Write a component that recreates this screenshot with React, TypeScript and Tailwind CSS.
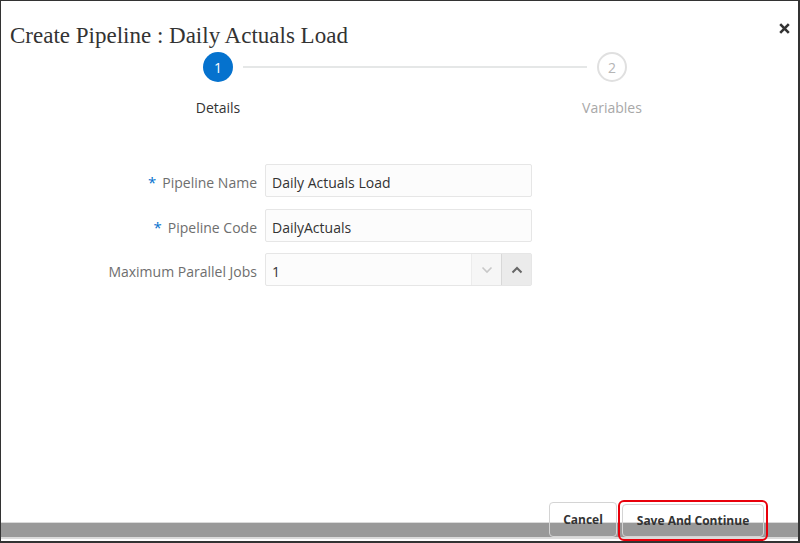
import React from "react";

const sans = "font-['Open_Sans','Liberation_Sans',sans-serif]";

function Field({ label, required, value }: { label: string; required?: boolean; value: string }) {
  return (
    <>
      <div className="flex h-[33px] items-center justify-end pt-[4px] text-[14px] text-[#6e6e6e]">
        {required && <span className="mr-[6px] align-[4px] text-[15px] leading-none text-[#0572ce]">*</span>}
        <span>{label}</span>
      </div>
      <div className="flex h-[33px] items-center rounded-[2px] border border-[#e6e6e6] bg-[#fcfcfc] px-[6px] pt-[4px] text-[14px] text-[#333]">
        {value}
      </div>
    </>
  );
}

export default function App() {
  return (
    <div
      className={`flex h-[543px] w-[800px] flex-col border-t border-l border-r-2 border-b-2 border-[#333] bg-white ${sans}`}
    >
      {/* header */}
      <div className="flex items-start justify-between pl-[9px] pr-[8px] pt-[21px]">
        <h1 className="h-[28px] font-['Liberation_Serif','DejaVu_Serif',serif] text-[23px] leading-[28px] text-[#333]">
          Create Pipeline : Daily Actuals Load
        </h1>
        <svg width="11" height="11" viewBox="0 0 11 11" className="mt-[1px]">
          <path d="M1.2 1.2 L9.8 9.8 M9.8 1.2 L1.2 9.8" stroke="#333" strokeWidth="2.6" strokeLinecap="butt" />
        </svg>
      </div>

      {/* stepper */}
      <div className="ml-[177px] mt-[2px] grid w-[474px] grid-cols-[80px_1fr_80px]">
        <div className="flex justify-center">
          <div className="flex h-[30px] w-[30px] items-center justify-center rounded-full bg-[#0572ce] text-[14px] text-white">
            1
          </div>
        </div>
        <div className="mx-[-15px] flex items-center">
          <div className="h-[2px] w-full bg-[#e5e7e7]" />
        </div>
        <div className="flex justify-center">
          <div className="flex h-[30px] w-[30px] items-center justify-center rounded-full border-2 border-[#e0e0e0] text-[14px] text-[#b5b5b5]">
            2
          </div>
        </div>
        <div className="mt-[16px] text-center text-[14px] leading-[20px] text-[#333]">Details</div>
        <div />
        <div className="mt-[16px] text-center text-[14px] leading-[20px] text-[#a8a8a8]">Variables</div>
      </div>

      {/* form */}
      <div className="mt-[46px] grid grid-cols-[256px_267px] gap-x-[8px] gap-y-[11.5px]">
        <Field label="Pipeline Name" required value="Daily Actuals Load" />
        <Field label="Pipeline Code" required value="DailyActuals" />
        <div className="flex h-[33px] items-center justify-end pt-[4px] text-[14px] text-[#6e6e6e]">Maximum Parallel Jobs</div>
        <div className="flex h-[33px] rounded-[2px] border border-[#e6e6e6] bg-[#fcfcfc] text-[14px] text-[#333]">
          <div className="flex flex-1 items-center px-[6px] pt-[4px]">1</div>
          <div className="flex w-[30px] items-center justify-center border-l border-[#ececec] bg-[#f6f6f6]">
            <svg width="12" height="8" viewBox="0 0 12 8">
              <path d="M1.5 1.5 L6 6 L10.5 1.5" fill="none" stroke="#c8c8c8" strokeWidth="1.6" />
            </svg>
          </div>
          <div className="flex w-[30px] items-center justify-center border-l border-[#d8d8d8] bg-[#ebebeb]">
            <svg width="12" height="8" viewBox="0 0 12 8">
              <path d="M1.5 6.5 L6 2 L10.5 6.5" fill="none" stroke="#666" strokeWidth="2" />
            </svg>
          </div>
        </div>
      </div>

      <div className="flex-1" />

      {/* footer */}
      <div className="flex h-[41px] items-start justify-end pr-[30px] bg-[linear-gradient(to_bottom,#fff_0px,#fff_22px,#dadada_22px,#dadada_23px,#999_23px,#999_37px,#dadada_37px,#dadada_39px,#fff_39px)]">
        <button className="mt-[2px] h-[35px] w-[68px] rounded-[4px] border border-[#d4d4d4] bg-transparent text-[12px] font-bold text-[#333]">
          Cancel
        </button>
        <div className="ml-[1px] rounded-[6px] border-2 border-[#e8000b] p-[2px]">
          <button className="h-[33px] w-[142px] rounded-[4px] border border-[#d4d4d4] bg-transparent text-[12px] font-bold text-[#333]">
            Save And Continue
          </button>
        </div>
      </div>
    </div>
  );
}
